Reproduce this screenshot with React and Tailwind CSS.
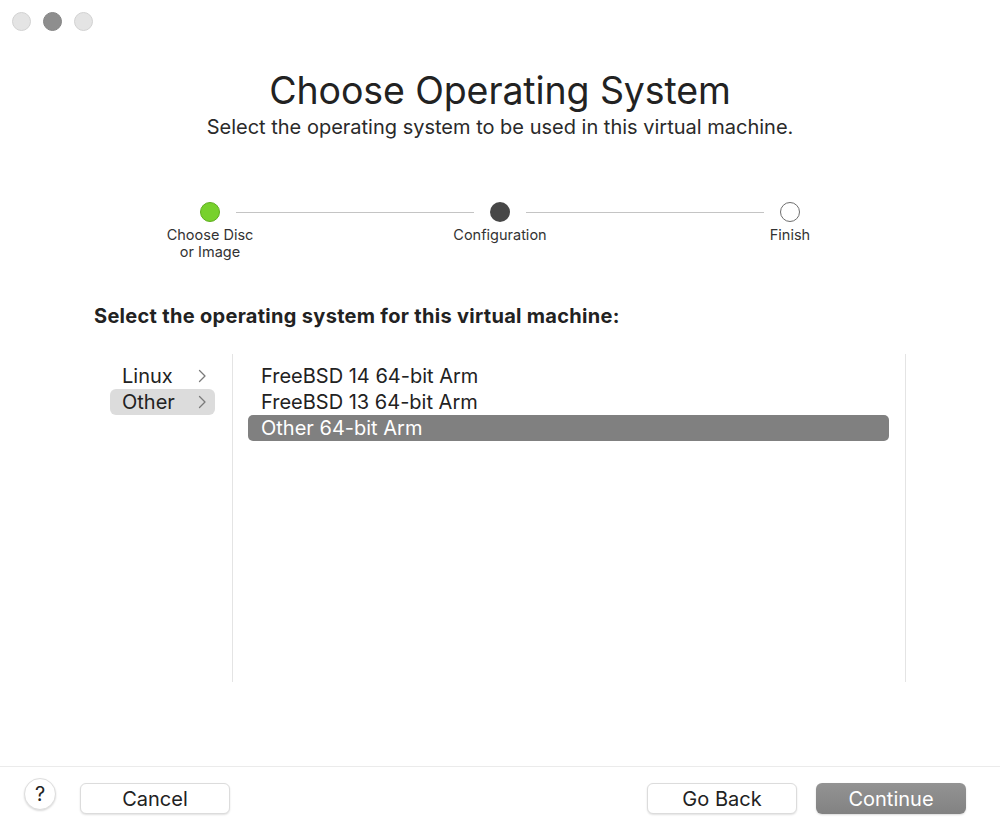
import { useState } from 'react';

const families = ['Linux', 'Other'];

const systems = {
    Linux: ['Ubuntu 24.04 64-bit Arm', 'Debian 12 64-bit Arm', 'Fedora 40 64-bit Arm'],
    Other: ['FreeBSD 14 64-bit Arm', 'FreeBSD 13 64-bit Arm', 'Other 64-bit Arm'],
};

const steps = [
    { label: ['Choose Disc', 'or Image'], state: 'done' },
    { label: ['Configuration'], state: 'current' },
    { label: ['Finish'], state: 'todo' },
];

function Chevron() {
    return (
        <svg width="9" height="14" viewBox="0 0 9 14" fill="none">
            <path
                d="M1.5 1.5L7 7l-5.5 5.5"
                stroke="#7a7a7a"
                strokeWidth="1.3"
                strokeLinecap="round"
                strokeLinejoin="round"
            />
        </svg>
    );
}

function StepDot({ state }) {
    if (state === 'done')
        return <div className="w-[20px] h-[20px] rounded-full bg-[#77d12c] border border-[#5fae1f]" />;
    if (state === 'current')
        return <div className="w-[20px] h-[20px] rounded-full bg-[#474747]" />;
    return <div className="w-[20px] h-[20px] rounded-full bg-white border border-[#6e6e6e]" />;
}

export default function App() {
    const [family, setFamily] = useState('Other');
    const [selected, setSelected] = useState('Other 64-bit Arm');

    return (
        <div
            className="w-[1000px] h-[833px] bg-white flex flex-col text-[#242424] overflow-hidden"
            style={{ fontFamily: 'Inter, "Noto Sans", sans-serif' }}
        >
            {/* window controls */}
            <div className="h-[42px] flex items-start pt-[12px] pl-[12px] gap-[12px]">
                <div className="w-[19px] h-[19px] rounded-full bg-[#e4e4e4] border border-[#d2d2d2]" />
                <div className="w-[19px] h-[19px] rounded-full bg-[#8e8e8e] border border-[#858585]" />
                <div className="w-[19px] h-[19px] rounded-full bg-[#e4e4e4] border border-[#d2d2d2]" />
            </div>

            <h1 className="mt-[26px] text-center text-[37.5px] leading-[46px] tracking-[-0.1px] text-[#222]">
                Choose Operating System
            </h1>
            <p className="mt-[1px] text-center text-[20px] leading-[24px] text-[#2a2a2a]">
                Select the operating system to be used in this virtual machine.
            </p>

            {/* stepper */}
            <div className="mt-[63px] mx-[150px] px-[50px] flex items-center">
                <StepDot state={steps[0].state} />
                <div className="flex-1 mx-[16px] h-px bg-[#c4c4c4]" />
                <StepDot state={steps[1].state} />
                <div className="flex-1 mx-[16px] h-px bg-[#c4c4c4]" />
                <StepDot state={steps[2].state} />
            </div>
            <div className="mt-[4px] mx-[150px] flex justify-between">
                {steps.map((step) => (
                    <div key={step.label[0]} className="w-[120px] text-center text-[14.5px] leading-[17px] text-[#333]">
                        {step.label.map((line) => (
                            <div key={line}>{line}</div>
                        ))}
                    </div>
                ))}
            </div>

            <h2 className="mt-[44px] ml-[94px] text-[20px] leading-[24px] tracking-[0.3px] font-bold text-[#222]">
                Select the operating system for this virtual machine:
            </h2>

            {/* column browser */}
            <div className="mt-[26px] h-[328px] pl-[110px] pr-[94px] flex">
                <div className="w-[122px] pt-[9px]">
                    {families.map((name) => (
                        <button
                            key={name}
                            onClick={() => setFamily(name)}
                            className={`w-[105px] h-[26px] flex items-center justify-between pl-[12px] pr-[8px] rounded-[6px] text-[20px] text-[#222] ${
                                family === name ? 'bg-[#dcdcdc]' : ''
                            }`}
                        >
                            <span>{name}</span>
                            <Chevron />
                        </button>
                    ))}
                </div>
                <div className="flex-1 border-l border-r border-[#e4e4e4] pl-[15px] pr-[16px] pt-[9px]">
                    {systems[family].map((name) => (
                        <button
                            key={name}
                            onClick={() => setSelected(name)}
                            className={`w-full h-[26px] flex items-center px-[13px] rounded-[5px] text-[20px] text-left ${
                                selected === name ? 'bg-[#808080] text-white' : 'text-[#222]'
                            }`}
                        >
                            {name}
                        </button>
                    ))}
                </div>
            </div>

            <div className="flex-1" />

            {/* footer */}
            <div className="h-[67px] border-t border-[#ebebeb] flex items-start pt-[16px]">
                <button className="ml-[24px] mt-[-5px] w-[32px] h-[32px] rounded-full bg-white border border-[#dedede] shadow-[0_1px_2px_rgba(0,0,0,0.15)] text-[20px] text-[#222] flex items-center justify-center">
                    ?
                </button>
                <button className="ml-[24px] w-[150px] h-[31px] rounded-[6px] bg-white border border-[#dcdcdc] shadow-[0_1px_2px_rgba(0,0,0,0.12)] text-[20px] text-[#222] flex items-center justify-center">
                    Cancel
                </button>
                <div className="flex-1" />
                <button className="w-[150px] h-[31px] rounded-[6px] bg-white border border-[#dcdcdc] shadow-[0_1px_2px_rgba(0,0,0,0.12)] text-[20px] text-[#222] flex items-center justify-center">
                    Go Back
                </button>
                <button className="ml-[19px] mr-[34px] w-[150px] h-[31px] rounded-[6px] bg-gradient-to-b from-[#939393] to-[#828282] shadow-[0_1px_2px_rgba(0,0,0,0.15)] text-[20px] text-white flex items-center justify-center">
                    Continue
                </button>
            </div>
        </div>
    );
}
